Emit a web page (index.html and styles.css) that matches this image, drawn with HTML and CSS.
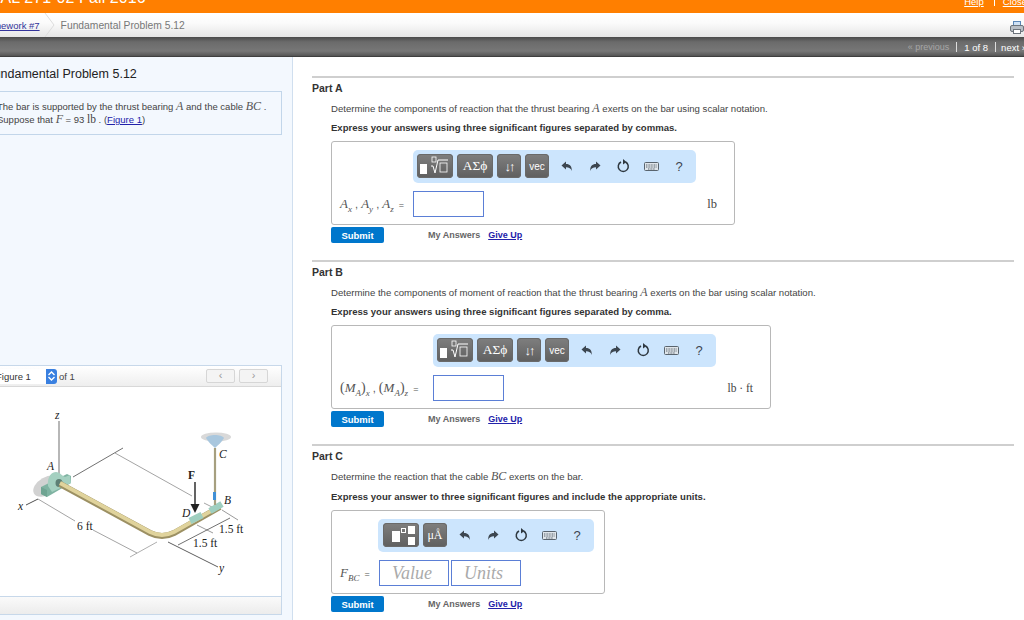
FILE: index.html
```html
<!DOCTYPE html>
<html lang="en">
<head>
<meta charset="utf-8">
<title>Fundamental Problem 5.12</title>
<link rel="stylesheet" href="styles.css">
</head>
<body>
<header class="brand">
  <div class="course">MAL 271-02 Fall 2016</div>
  <div class="brand-links"><a>Help</a><i class="sep"></i><a>Close</a></div>
</header>
<nav class="crumbs">
  <a class="crumb-link">Homework #7</a>
  <svg class="chevron" width="12" height="24" viewBox="0 0 12 24"><path d="M1 0 L10 12 L1 24" fill="none" stroke="#dcdcdc"/></svg>
  <span class="crumb-current">Fundamental Problem 5.12</span>
  <svg class="printer" width="14" height="13" viewBox="0 0 14 13">
    <rect x="3.500" y="0.500" width="7" height="5" fill="#cfe2f6" stroke="#5b87b8"/>
    <rect x="0.500" y="4.500" width="13" height="6" rx="1.500" fill="#b9bfc6" stroke="#6d747c"/>
    <rect x="3.500" y="8.500" width="7" height="4" fill="#fff" stroke="#6d747c"/>
  </svg>
</nav>
<div class="pager">
  <span class="pager-off">« previous</span><i class="pager-sep"></i><span class="pager-now">1 of 8</span><i class="pager-sep"></i><span class="pager-next">next »</span>
</div>
<main class="page">
  <aside class="left">
    <h1 class="title">Fundamental Problem 5.12</h1>
    <div class="intro">The bar is supported by the thrust bearing <span class="m">A</span> and the cable <span class="m">BC</span> .<br>Suppose that <span class="m">F</span> = 93 <span class="r">lb</span> . (<a class="link">Figure 1</a>)</div>
    <section class="figure">
      <div class="fig-bar">
        <span class="select">Figure 1<b class="spin"><svg width="9" height="12" viewBox="0 0 9 12"><path d="M1.500 5 L4.500 2 L7.500 5 M1.500 7 L4.500 10 L7.500 7" fill="none" stroke="#fff" stroke-width="1.400"/></svg></b></span>
        <span class="of">of 1</span>
        <span class="fig-nav"><b class="nav-btn">‹</b><b class="nav-btn">›</b></span>
      </div>
      <div class="fig-body">
        <svg class="diagram" width="282" height="210" viewBox="0 387 282 210">
          <ellipse cx="47" cy="486" rx="15" ry="9" fill="#d2d2d2" transform="rotate(-30 47 486)"/>
          <path d="M59 421 V474" stroke="#a5a5a5" stroke-width="1.600"/>
          <path d="M73 477 L123 448" stroke="#333" stroke-width=".7" fill="none"/>
          <path d="M115 453 L192 496 M204 503 L214 508" stroke="#666" stroke-width=".6" fill="none"/>
          <path d="M26 505 L38 499" stroke="#222" stroke-width=".8"/>
          <path d="M38 499 L75 521 M93 530 L137 553" stroke="#666" stroke-width=".6" fill="none"/>
          <path d="M130 557 L157 542" stroke="#777" stroke-width=".6"/>
          <path d="M168 542 L218 567" stroke="#333" stroke-width=".8"/>
          <path d="M222 510 L238 520 M197 525 L213 533" stroke="#555" stroke-width=".6" fill="none"/>
          <path d="M178 545 L230 518" stroke="#333" stroke-width=".7"/>
          <path d="M41 487 L67 474 L71 476 L71 483 L47 497 L41 494 Z" fill="#7fb3a2"/>
          <path d="M48 486 C47 476 52 472 56 472 C60 472 62 476 65 477 L70 475 L71 483 L52 492 Z" fill="#a4d0c0"/>
          <path d="M41 487 L47 490 L47 497 L41 494 Z" fill="#6fa492"/>
          <ellipse cx="59" cy="483" rx="3.500" ry="4" fill="#5d7f74"/>
          <path d="M60 484 L150 533 Q162 539 174 533 L220 507" fill="none" stroke="#9c9063" stroke-width="6"/>
          <path d="M60 483 L150 532 Q162 538 174 532 L220 506" fill="none" stroke="#e0d39c" stroke-width="3.800"/>
          <path d="M190 521 L202 515 M210 511 L222 504" fill="none" stroke="#9fcfc0" stroke-width="6.500"/>
          <path d="M215 448 V505" stroke="#a69f7f" stroke-width="2.200"/>
          <path d="M214.500 492 V500" stroke="#3f8fd6" stroke-width="3"/>
          <ellipse cx="216" cy="437" rx="15" ry="4.500" fill="#d9d9d9"/>
          <path d="M206 438 C208 434 222 434 224 438 C222 442 218 445 215 448 C212 445 208 442 206 438 Z" fill="#a9c7de"/>
          <path d="M195 482 V506" stroke="#222" stroke-width="1.400"/>
          <path d="M190.500 504 H199.500 L195 513 Z" fill="#222"/>
          <text class="fi" x="55" y="419">z</text>
          <text class="fi" x="47" y="470">A</text>
          <text class="fi" x="18" y="510">x</text>
          <text class="fi" x="219" y="458">C</text>
          <text class="fb" x="188" y="479">F</text>
          <text class="fi" x="182" y="517">D</text>
          <text class="fi" x="224" y="504">B</text>
          <text class="fi" x="219" y="572">y</text>
          <text class="fr" x="77" y="530">6 ft</text>
          <text class="fr" x="219" y="533">1.5 ft</text>
          <text class="fr" x="193" y="547">1.5 ft</text>
        </svg>
      </div>
      <div class="fig-foot"></div>
    </section>
  </aside>
  <div class="right">
    <section class="part">
      <h2 class="part-title">Part A</h2>
      <p class="prompt">Determine the components of reaction that the thrust bearing <span class="m">A</span> exerts on the bar using scalar notation.</p>
      <p class="ask">Express your answers using three significant figures separated by commas.</p>
      <div class="box box-a">
        <div class="toolbar">
          <b class="tbtn t-tpl"><i class="sq"></i><svg width="24" height="20" viewBox="0 0 24 20"><path d="M2 10 L4 10 L6 17 L9 4 H19" fill="none" stroke="#fff"/><rect x="3" y="1" width="4" height="5" fill="none" stroke="#fff" stroke-width=".8"/><rect x="11" y="7" width="7" height="9" fill="none" stroke="#fff" stroke-width=".8"/></svg></b>
          <b class="tbtn t-sym">ΑΣϕ</b>
          <b class="tbtn t-arr">↓↑</b>
          <b class="tbtn t-vec">vec</b>
          <span class="tool"><svg width="12" height="11" viewBox="0 0 12 11"><path d="M0.500 4.500 L5 0.500 V3 C9 3 11 5.500 10.800 10 C10 7.500 8 6.300 5 6.300 V8.500 Z" fill="#3c4650"/></svg></span>
          <span class="tool"><svg width="12" height="11" viewBox="0 0 12 11"><path d="M11.500 4.500 L7 0.500 V3 C3 3 1 5.500 1.200 10 C2 7.500 4 6.300 7 6.300 V8.500 Z" fill="#3c4650"/></svg></span>
          <span class="tool"><svg width="13" height="14" viewBox="0 0 13 14"><path d="M8.500 3 A5 5 0 1 1 4 3" fill="none" stroke="#2e3840" stroke-width="1.500"/><path d="M6 0 L9.500 3 L6 5.500 Z" fill="#2e3840"/></svg></span>
          <span class="tool"><svg width="15" height="9" viewBox="0 0 15 9"><rect x=".5" y=".5" width="14" height="8" rx="1" fill="#dfe5ea" stroke="#59646e"/><path d="M2 3 H13 M2 5 H13 M4 7 H11" stroke="#59646e" stroke-dasharray="1 .6"/></svg></span>
          <span class="tool help">?</span>
        </div>
        <div class="row">
          <span class="eq eq-a"><span class="m">A<sub>x</sub></span> , <span class="m">A<sub>y</sub></span> , <span class="m">A<sub>z</sub></span> <span class="eq-sign">=</span></span>
          <span class="field"></span>
          <span class="unit r">lb</span>
        </div>
      </div>
      <div class="actions"><b class="submit">Submit</b><span class="mine">My Answers</span><a class="giveup">Give Up</a></div>
    </section>
    <section class="part">
      <h2 class="part-title">Part B</h2>
      <p class="prompt">Determine the components of moment of reaction that the thrust bearing <span class="m">A</span> exerts on the bar using scalar notation.</p>
      <p class="ask">Express your answers using three significant figures separated by comma.</p>
      <div class="box box-b">
        <div class="toolbar">
          <b class="tbtn t-tpl"><i class="sq"></i><svg width="24" height="20" viewBox="0 0 24 20"><path d="M2 10 L4 10 L6 17 L9 4 H19" fill="none" stroke="#fff"/><rect x="3" y="1" width="4" height="5" fill="none" stroke="#fff" stroke-width=".8"/><rect x="11" y="7" width="7" height="9" fill="none" stroke="#fff" stroke-width=".8"/></svg></b>
          <b class="tbtn t-sym">ΑΣϕ</b>
          <b class="tbtn t-arr">↓↑</b>
          <b class="tbtn t-vec">vec</b>
          <span class="tool"><svg width="12" height="11" viewBox="0 0 12 11"><path d="M0.500 4.500 L5 0.500 V3 C9 3 11 5.500 10.800 10 C10 7.500 8 6.300 5 6.300 V8.500 Z" fill="#3c4650"/></svg></span>
          <span class="tool"><svg width="12" height="11" viewBox="0 0 12 11"><path d="M11.500 4.500 L7 0.500 V3 C3 3 1 5.500 1.200 10 C2 7.500 4 6.300 7 6.300 V8.500 Z" fill="#3c4650"/></svg></span>
          <span class="tool"><svg width="13" height="14" viewBox="0 0 13 14"><path d="M8.500 3 A5 5 0 1 1 4 3" fill="none" stroke="#2e3840" stroke-width="1.500"/><path d="M6 0 L9.500 3 L6 5.500 Z" fill="#2e3840"/></svg></span>
          <span class="tool"><svg width="15" height="9" viewBox="0 0 15 9"><rect x=".5" y=".5" width="14" height="8" rx="1" fill="#dfe5ea" stroke="#59646e"/><path d="M2 3 H13 M2 5 H13 M4 7 H11" stroke="#59646e" stroke-dasharray="1 .6"/></svg></span>
          <span class="tool help">?</span>
        </div>
        <div class="row">
          <span class="eq eq-b"><span class="r par">(</span><span class="m">M<sub>A</sub></span><span class="r par">)</span><span class="m"><sub>x</sub></span> , <span class="r par">(</span><span class="m">M<sub>A</sub></span><span class="r par">)</span><span class="m"><sub>z</sub></span> <span class="eq-sign">=</span></span>
          <span class="field"></span>
          <span class="unit r">lb · ft</span>
        </div>
      </div>
      <div class="actions"><b class="submit">Submit</b><span class="mine">My Answers</span><a class="giveup">Give Up</a></div>
    </section>
    <section class="part">
      <h2 class="part-title">Part C</h2>
      <p class="prompt">Determine the reaction that the cable <span class="m">BC</span> exerts on the bar.</p>
      <p class="ask ask-c">Express your answer to three significant figures and include the appropriate units.</p>
      <div class="box box-c">
        <div class="toolbar">
          <b class="tbtn t-tpl t-units"><i class="sq sq-c"></i><i class="sup"></i><span class="frac"><i></i><i></i></span></b>
          <b class="tbtn t-mu">μÅ</b>
          <span class="tool"><svg width="12" height="11" viewBox="0 0 12 11"><path d="M0.500 4.500 L5 0.500 V3 C9 3 11 5.500 10.800 10 C10 7.500 8 6.300 5 6.300 V8.500 Z" fill="#3c4650"/></svg></span>
          <span class="tool"><svg width="12" height="11" viewBox="0 0 12 11"><path d="M11.500 4.500 L7 0.500 V3 C3 3 1 5.500 1.200 10 C2 7.500 4 6.300 7 6.300 V8.500 Z" fill="#3c4650"/></svg></span>
          <span class="tool"><svg width="13" height="14" viewBox="0 0 13 14"><path d="M8.500 3 A5 5 0 1 1 4 3" fill="none" stroke="#2e3840" stroke-width="1.500"/><path d="M6 0 L9.500 3 L6 5.500 Z" fill="#2e3840"/></svg></span>
          <span class="tool"><svg width="15" height="9" viewBox="0 0 15 9"><rect x=".5" y=".5" width="14" height="8" rx="1" fill="#dfe5ea" stroke="#59646e"/><path d="M2 3 H13 M2 5 H13 M4 7 H11" stroke="#59646e" stroke-dasharray="1 .6"/></svg></span>
          <span class="tool help">?</span>
        </div>
        <div class="row row-c">
          <span class="eq eq-c"><span class="m">F<sub>BC</sub></span> <span class="eq-sign">=</span></span>
          <span class="field field-text">Value</span>
          <span class="field field-text">Units</span>
        </div>
      </div>
      <div class="actions"><b class="submit">Submit</b><span class="mine">My Answers</span><a class="giveup">Give Up</a></div>
    </section>
  </div>
</main>
</body>
</html>
```
FILE: styles.css
```css
* { box-sizing: border-box; }
html, body { margin: 0; padding: 0; }
body {
  width: 1024px;
  height: 620px;
  overflow: hidden;
  background: #fff;
  font-family: "Liberation Sans", Arial, sans-serif;
  color: #333;
}
a { cursor: pointer; }

.brand {
  height: 13px;
  background: #ff7f00;
  overflow: hidden;
  display: flex;
  justify-content: space-between;
  color: #fff;
}
.course {
  font-size: 16px;
  line-height: 18px;
  margin: -11px 0 0 -13px;
  letter-spacing: .1px;
  white-space: nowrap;
}
.brand-links {
  display: flex;
  align-items: center;
  height: 8px;
  margin: -3px -3px 0 0;
  font-size: 9.500px;
  gap: 10px;
}
.brand-links a { text-decoration: underline; }
.sep { width: 1px; height: 10px; background: #fff; margin-right: -2px; }

.crumbs {
  height: 24px;
  display: flex;
  align-items: center;
  background: linear-gradient(#fff, #fbfbfb 40%, #e6e6e6);
  font-size: 10.300px;
}
.crumb-link {
  margin-left: -19px;
  font-size: 9.500px;
  color: #33339a;
  text-decoration: underline;
  white-space: nowrap;
}
.chevron { margin-left: 4px; }
.crumb-current { margin-left: 5px; color: #777; }
.printer { margin-left: auto; margin-right: 0; margin-top: 4px; }

.pager {
  height: 20px;
  display: flex;
  justify-content: flex-end;
  align-items: center;
  background: linear-gradient(#4b4b4b, #6b6b6b 25%, #777 70%, #5a5a5a 92%, #333);
  font-size: 9.500px;
  color: #fff;
  white-space: nowrap;
  overflow: hidden;
}
.pager-off { color: #a6a6a6; font-size: 9px; }
.pager-sep { width: 1px; height: 10px; background: #ddd; margin: 0 7px; }
.pager-next { margin: 0 -3px 0 -2px; }

.page { display: flex; height: 563px; }

.left {
  width: 293px;
  flex: none;
  background: #f3f8fe;
  border-right: 1px solid #d0dfef;
  display: flex;
  flex-direction: column;
  overflow: hidden;
}
.title {
  margin: 10px 0 0 -14px;
  font-size: 12.500px;
  line-height: 15px;
  font-weight: normal;
  color: #222;
  white-space: nowrap;
}
.intro {
  margin: 9px 10px 0 -10px;
  height: 44px;
  padding: 8px 0 0 6px;
  border: 1px solid #c2d6ea;
  font-size: 9.500px;
  line-height: 12px;
  color: #444;
  white-space: nowrap;
}
.m { font-family: "Liberation Serif", serif; font-style: italic; font-size: 12px; color: #555; }
.m sub { font-size: 8px; line-height: 0; }
.r { font-family: "Liberation Serif", serif; font-size: 11.500px; color: #444; }
.link { color: #2222aa; text-decoration: underline; }

.figure {
  margin: auto 10px 5px -10px;
  height: 250px;
  border: 1px solid #c7d8ea;
  background: #fff;
  display: flex;
  flex-direction: column;
}
.fig-bar {
  height: 21px;
  display: flex;
  align-items: center;
  background: linear-gradient(#fff, #eee);
  border-bottom: 1px solid #d8d8d8;
  font-size: 9.500px;
}
.select {
  width: 66px;
  height: 15px;
  padding-left: 5px;
  background: #fff;
  display: flex;
  align-items: center;
  justify-content: space-between;
  color: #333;
  white-space: nowrap;
  border-radius: 2px;
}
.spin {
  width: 11px;
  height: 15px;
  background: #3a80e0;
  border-radius: 0 3px 3px 0;
  display: flex;
  align-items: center;
  justify-content: center;
}
.of { margin-left: 2px; color: #444; }
.fig-nav { margin-left: auto; margin-right: 13px; display: flex; gap: 4px; }
.nav-btn {
  width: 29px;
  height: 14px;
  border: 1px solid #d6d6d6;
  border-radius: 2px;
  background: #f4f4f4;
  font-size: 11px;
  font-weight: normal;
  line-height: 11px;
  text-align: center;
  color: #999;
}
.fig-body { height: 209px; margin-left: -1px; overflow: hidden; }
.diagram { display: block; margin-left: 10px; }
.diagram text { font-family: "Liberation Serif", serif; font-size: 11.500px; fill: #222; }
.diagram .fi { font-style: italic; }
.diagram .fb { font-weight: bold; font-size: 11.500px; }
.fig-foot {
  flex: 1;
  border-top: 1px solid #c7d8ea;
  background: linear-gradient(#fafafa, #ececec);
}

.right { flex: 1; padding: 19px 10px 0 19px; }
.part {
  height: 184px;
  border-top: 2px solid #cfcfcf;
  padding-left: 19px;
}
.part-title {
  margin: 4px 0 0 -19px;
  font-size: 10.500px;
  line-height: 12px;
  font-weight: bold;
  color: #333;
}
.prompt {
  margin: 7px 0 0;
  font-size: 9.600px;
  line-height: 14px;
  color: #444;
  white-space: nowrap;
}
.ask {
  margin: 6px 0 0;
  font-size: 9.550px;
  line-height: 12px;
  font-weight: bold;
  color: #333;
  white-space: nowrap;
}
.ask-c { margin-top: 7px; }
.box {
  margin-top: 7px;
  height: 84px;
  border: 1px solid #b8b8b8;
  border-radius: 3px;
  padding-top: 8px;
}
.box-a { width: 404px; --lead: 81px; }
.box-b { width: 440px; --lead: 101px; }
.box-c { width: 274px; --lead: 46px; }

.toolbar {
  margin-left: var(--lead);
  width: 283px;
  height: 33px;
  background: #cce5fd;
  border-radius: 5px;
  padding: 4px 3px 0 4px;
  display: flex;
}
.box-c .toolbar { width: 216px; padding-left: 5px; }
.tbtn {
  height: 24px;
  margin-right: 4px;
  background: linear-gradient(#7f7f7f, #5f5f5f);
  border-radius: 4px;
  box-shadow: inset 0 0 0 1px #6a6a6a;
  color: #fff;
  display: flex;
  align-items: center;
  justify-content: center;
  font-weight: normal;
  flex: none;
}
.t-tpl { width: 36px; gap: 2px; padding-left: 3px; }
.sq { width: 7px; height: 10px; background: #fff; margin-top: 5px; flex: none; }
.t-sym { width: 36px; font-family: "Liberation Serif", serif; font-size: 13.500px; }
.t-arr { width: 24px; font-size: 13px; letter-spacing: -2px; }
.t-vec { width: 24px; font-size: 10px; }
.t-mu { width: 24px; font-family: "Liberation Serif", serif; font-size: 12px; }
.t-units { gap: 0; padding-left: 5px; }
.sq-c { width: 8px; height: 11px; margin-top: 3px; }
.sup { width: 5px; height: 5px; border: 1px solid #fff; margin: -9px 2px 0 1px; flex: none; }
.frac { display: flex; flex-direction: column; gap: 3px; }
.frac i { display: block; width: 7px; height: 8px; background: #fff; }
.tool {
  width: 28px;
  flex: none;
  height: 24px;
  display: flex;
  align-items: center;
  justify-content: center;
}
.help { font-size: 13px; color: #3c4650; }

.row {
  display: flex;
  align-items: center;
  height: 26px;
  margin-top: 8px;
}
.eq {
  width: var(--lead);
  flex: none;
  padding-left: 8px;
  white-space: nowrap;
  font-size: 11px;
  color: #555;
}
.eq .m { font-size: 13px; }
.eq .m sub { font-size: 9px; }
.eq .par { font-size: 14px; color: #555; }
.eq-sign { font-family: "Liberation Sans", sans-serif; font-size: 9px; margin-left: 2px; }
.field {
  width: 71px;
  height: 26px;
  border: 1px solid #5b7fd6;
  background: #fff;
  flex: none;
}
.field-text {
  width: 70px;
  margin-right: 2px;
  font-family: "Liberation Serif", serif;
  font-style: italic;
  font-size: 18px;
  line-height: 24px;
  padding-left: 12px;
  color: #aaa;
}
.row-c .eq { width: 47px; }
.unit { margin-left: auto; margin-right: 17px; font-size: 12.500px; }
.box-b .unit { font-size: 11.500px; }

.actions {
  display: flex;
  align-items: center;
  height: 16px;
  margin-top: 2px;
  font-size: 9px;
  font-weight: bold;
}
.submit {
  width: 53px;
  height: 16px;
  background: #0077cc;
  color: #fff;
  border-radius: 2px;
  font-size: 9.500px;
  line-height: 17px;
  text-align: center;
}
.mine { margin-left: 44px; color: #666; }
.giveup { margin-left: 8px; color: #2222aa; text-decoration: underline; }
```
